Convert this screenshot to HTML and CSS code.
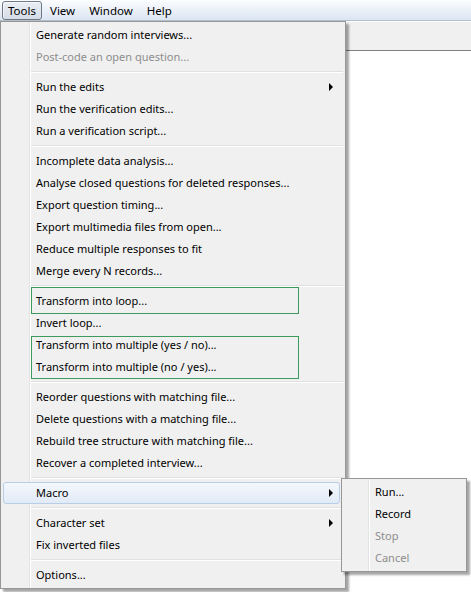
FILE: index.html
```html
<!DOCTYPE html>
<html lang="en">
<head>
<meta charset="UTF-8">
<title>Tools menu</title>
<link rel="stylesheet" href="styles.css">
</head>
<body>
<div class="menubar">
  <span class="menubar-item active">Tools</span>
  <span class="menubar-item">View</span>
  <span class="menubar-item">Window</span>
  <span class="menubar-item">Help</span>
</div>
<div class="workspace">
  <div class="toolbar"></div>
  <div class="content"></div>

  <!-- Tools dropdown -->
  <div class="dropdown">
    <div class="item">Generate random interviews...</div>
    <div class="item disabled">Post-code an open question...</div>
    <div class="sep"></div>
    <div class="item">Run the edits<span class="arrow"></span></div>
    <div class="item">Run the verification edits...</div>
    <div class="item">Run a verification script...</div>
    <div class="sep"></div>
    <div class="item">Incomplete data analysis...</div>
    <div class="item">Analyse closed questions for deleted responses...</div>
    <div class="item">Export question timing...</div>
    <div class="item">Export multimedia files from open...</div>
    <div class="item">Reduce multiple responses to fit</div>
    <div class="item">Merge every N records...</div>
    <div class="sep"></div>
    <div class="marked mark-one">
      <div class="item">Transform into loop...</div>
    </div>
    <div class="item">Invert loop...</div>
    <div class="marked mark-two">
      <div class="item">Transform into multiple (yes / no)...</div>
      <div class="item">Transform into multiple (no / yes)...</div>
    </div>
    <div class="sep"></div>
    <div class="item">Reorder questions with matching file...</div>
    <div class="item">Delete questions with a matching file...</div>
    <div class="item">Rebuild tree structure with matching file...</div>
    <div class="item">Recover a completed interview...</div>
    <div class="sep"></div>
    <div class="item hover">Macro<span class="arrow"></span></div>
    <div class="sep"></div>
    <div class="item">Character set<span class="arrow"></span></div>
    <div class="item">Fix inverted files</div>
    <div class="sep"></div>
    <div class="item">Options...</div>
  </div>

  <!-- Macro submenu -->
  <div class="dropdown submenu">
    <div class="item">Run...</div>
    <div class="item">Record</div>
    <div class="item disabled">Stop</div>
    <div class="item disabled">Cancel</div>
  </div>
</div>
</body>
</html>
```

FILE: styles.css
```css
/* page and window frame */
body, html {
  margin: 0;
  padding: 0;
  height: 100%;
  overflow: hidden;
  font-family: "Noto Sans", "Open Sans", sans-serif;
  font-size: 11px;
  color: #000;
  background: #fff;
}
/* top menu bar */
.menubar {
  display: flex;
  gap: 2px;
  height: 21px;
  padding-left: 2px;
  background: linear-gradient(#fcfdfe, #dbe5f3);
  border-bottom: 1px solid #b4bdca;
  box-sizing: border-box;
}
.menubar-item {
  display: flex;
  align-items: center;
  margin-top: 1px;
  height: 19px;
  padding: 0 5px 1px;
  border: 1px solid transparent;
  box-sizing: border-box;
  font-size: 11.5px;
}
.menubar-item.active {
  border-color: #6e7886;
  border-radius: 3px;
  background: linear-gradient(#e9eef4, #d5dce6);
  box-shadow: inset 1px 1px 0 rgba(255,255,255,0.6);
}
/* the window area under the menu bar */
.workspace {
  position: relative;
  display: flex;
  flex-direction: column;
  height: calc(100% - 21px);
}
.toolbar {
  height: 28px;
  background: #f0f0f0;
  border-top: 1px solid #fff;
  border-bottom: 1px solid #7f7f7f;
}
.content {
  flex: 1;
  background: #fff;
}
/* dropdown menus (they sit over the window) */
.dropdown {
  position: absolute;
  top: 0;
  left: 0;
  width: 346px;
  padding: 2px;
  box-sizing: border-box;
  background-color: #f0f0f0;
  background-image: linear-gradient(to right, transparent 28px, #e2e3e3 28px, #e2e3e3 29px, #fff 29px, #fff 30px, transparent 30px);
  border: 1px solid #979797;
  box-shadow: 3px 3px 2px rgba(0,0,0,0.35);
}
.item {
  display: flex;
  align-items: center;
  height: 22px;
  padding: 0 6px 2px 32px;
  margin-right: 3px;
  border: 1px solid transparent;
  border-radius: 3px;
  box-sizing: border-box;
  white-space: nowrap;
}
.item.disabled {
  color: #8d8d8d;
}
.item.hover {
  border-color: #b9cde6;
  background: linear-gradient(#f4f8fc, #e1eaf7);
}
.arrow {
  margin-left: auto;
  margin-top: 2px;
  width: 0;
  height: 0;
  border-left: 4px solid #000;
  border-top: 4px solid transparent;
  border-bottom: 4px solid transparent;
}
.sep {
  height: 8px;
  margin-left: 28px;
  background: linear-gradient(transparent 3px, #e0e0e0 3px, #e0e0e0 4px, #fff 4px, #fff 5px, transparent 5px);
}
/* green annotation boxes */
.marked {
  position: relative;
}
.marked::after {
  content: "";
  position: absolute;
  left: 28px;
  width: 268px;
  border: 1px solid #3c9a5c;
  box-sizing: border-box;
}
.mark-one::after {
  top: -3px;
  height: 27px;
}
.mark-two::after {
  top: 2px;
  height: 43px;
}
/* macro submenu */
.submenu {
  top: 457px;
  left: 341px;
  width: 126px;
  background-image: linear-gradient(to right, transparent 26px, #e2e3e3 26px, #e2e3e3 27px, #fff 27px, #fff 28px, transparent 28px);
}
.submenu .item {
  padding-left: 30px;
  margin-right: 0;
}
```
